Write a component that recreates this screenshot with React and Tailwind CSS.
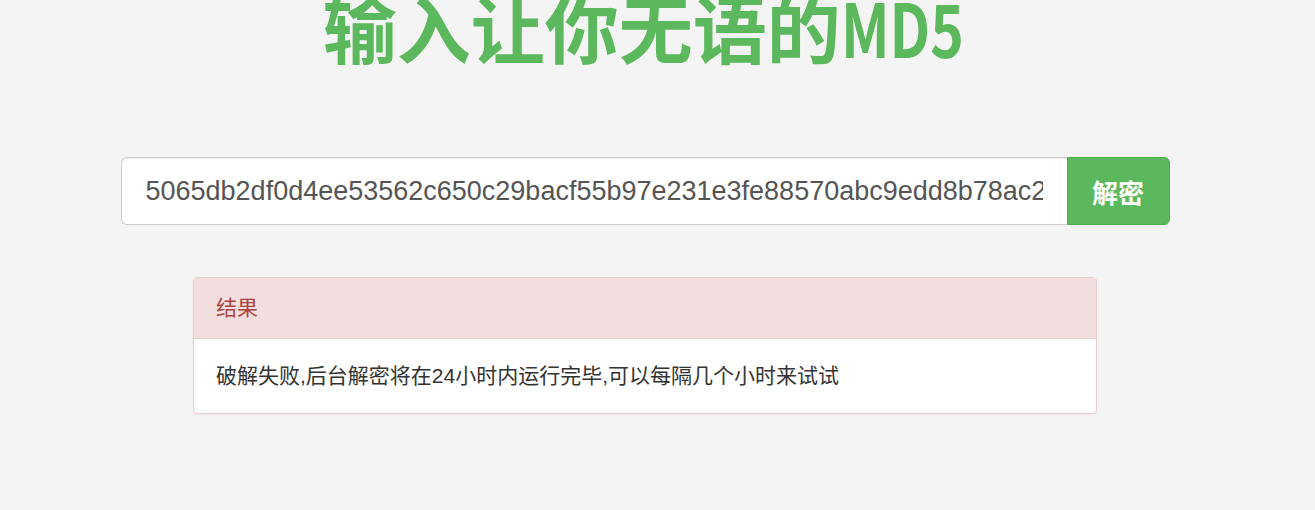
import { useState } from 'react'

function App() {
  const [hash, setHash] = useState('5065db2df0d4ee53562c650c29bacf55b97e231e3fe88570abc9edd8b78ac2')

  return (
    <div className="min-h-[510px] overflow-hidden bg-[#f4f4f4] font-['Liberation_Sans','Noto_Sans_CJK_SC',sans-serif]">
      <div className="w-[1290px] flex flex-col items-center">
        {/* Title */}
        <h1 className="mt-[-11px] h-[74px] text-[74px] leading-none font-bold text-[#5cb85c] whitespace-nowrap font-['Noto_Sans_CJK_SC',sans-serif]">
          输入让你无语的
          <span className="inline-block origin-left scale-x-[0.77] mr-[-33px]">MD5</span>
        </h1>

        {/* Search bar */}
        <div className="mt-[94px] w-[1049px] h-[68px] flex">
          <input
            type="text"
            value={hash}
            onChange={(e) => setHash(e.target.value)}
            className="flex-1 min-w-0 h-full px-6 bg-white border border-[#ccc] border-r-0 rounded-l-[6px] text-[27px] text-[#555] outline-none shadow-[inset_0_1px_1px_rgba(0,0,0,0.075)] font-['Liberation_Sans',sans-serif]"
          />
          <button
            type="button"
            className="w-[103px] h-full shrink-0 bg-[#5cb85c] border border-[#4cae4c] rounded-r-[6px] text-white text-[26px] font-bold font-['Noto_Sans_CJK_SC',sans-serif]"
          >
            解密
          </button>
        </div>

        {/* Result panel */}
        <div className="mt-[52px] w-[904px] rounded-[4px] border border-[#ebccd1] bg-white shadow-[0_1px_1px_rgba(0,0,0,0.05)] overflow-hidden">
          <div className="h-[61px] px-[22px] flex items-center bg-[#f2dede] border-b border-[#ebccd1] text-[#a94442] text-[21px]">
            结果
          </div>
          <div className="h-[74px] px-[22px] flex items-center text-[#333] text-[21px]">
            破解失败,后台解密将在24小时内运行完毕,可以每隔几个小时来试试
          </div>
        </div>
      </div>
    </div>
  )
}

export default App
